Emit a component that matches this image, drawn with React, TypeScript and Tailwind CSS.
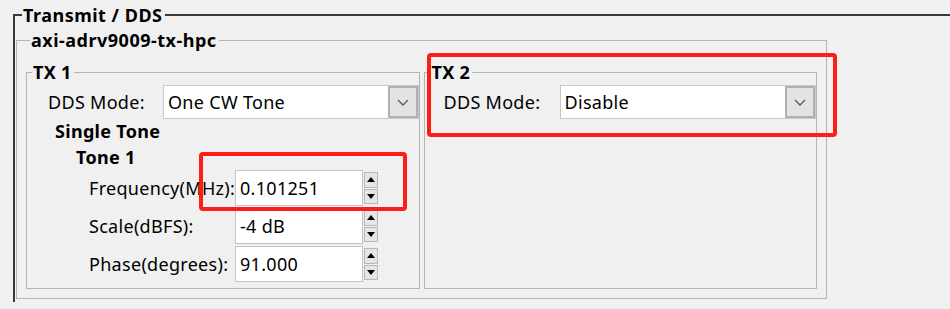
import React from 'react';

function Chevron() {
  return (
    <svg width="12" height="7" viewBox="0 0 12 7">
      <polyline points="1,1 6,6 11,1" fill="none" stroke="#5a5a5a" strokeWidth="1.3" />
    </svg>
  );
}

function Combo({ value }: { value: string }) {
  return (
    <div className="flex h-[34px] flex-1 border border-[#c8c8c8] bg-white">
      <div className="flex flex-1 items-center pl-[4px]">{value}</div>
      <div className="flex w-[30px] items-center justify-center border-2 border-[#b0b0b0] bg-[#e3e3e3]">
        <Chevron />
      </div>
    </div>
  );
}

function SpinButton({ up }: { up?: boolean }) {
  return (
    <div className="flex flex-1 items-center justify-center border border-[#b8b8b8] bg-[#e6e6e6]">
      <svg width="8" height="5" viewBox="0 0 8 5">
        {up ? <polygon points="0,5 4,0 8,5" fill="#000" /> : <polygon points="0,0 8,0 4,5" fill="#000" />}
      </svg>
    </div>
  );
}

function SpinRow({ label, value }: { label: string; value: string }) {
  return (
    <div className="ml-[62px] flex h-[36px] items-center">
      <div className="w-[146px] whitespace-nowrap">{label}</div>
      <div className="flex h-full w-[128px] items-center border border-[#c4c4c4] bg-white pl-[4px]">{value}</div>
      <div className="ml-[1px] flex h-full w-[14px] flex-col gap-[1px] py-[2px]">
        <SpinButton up />
        <SpinButton />
      </div>
    </div>
  );
}

export default function App() {
  return (
    <div className="relative h-[309px] w-[950px] overflow-hidden bg-[#f0f0f0] font-['Noto_Sans',sans-serif] text-[18px] leading-[24px] tracking-[0.3px] text-black">
      <fieldset className="ml-[13px] mt-[3px] w-[960px] min-w-0 border-l-2 border-t-2 border-[#3a3a3a] pb-[3px] pl-[1px]">
        <legend className="ml-[6px] pl-[1px] pr-[2px] font-bold tracking-[0.5px]">Transmit / DDS</legend>

        <fieldset className="mt-[1px] w-[811px] min-w-0 border border-[#b4b4b4] pb-[9px] pl-[9px] pr-[9px]">
          <legend className="ml-[4px] pl-[1px] pr-[2px] font-bold tracking-[0.5px]">axi-adrv9009-tx-hpc</legend>

          <div className="mt-[8px] grid grid-cols-2 gap-[4px]">
            <fieldset className="min-w-0 border border-[#b4b4b4] pb-[6px]">
              <legend className="ml-[5px] pl-[1px] pr-[2px] font-bold">TX 1</legend>
              <div className="mt-[1px] flex items-center">
                <div className="ml-[21px] w-[115px]">DDS Mode:</div>
                <Combo value="One CW Tone" />
              </div>
              <div className="ml-[28px] font-bold">Single Tone</div>
              <div className="ml-[49px] mt-[2px] font-bold">Tone 1</div>
              <div className="mt-[1px] flex flex-col gap-[2px]">
                <SpinRow label="Frequency(MHz):" value="0.101251" />
                <SpinRow label="Scale(dBFS):" value="-4 dB" />
                <SpinRow label="Phase(degrees):" value="91.000" />
              </div>
            </fieldset>

            <fieldset className="min-w-0 border border-[#b4b4b4]">
              <legend className="ml-[6px] pl-[1px] pr-[2px] font-bold">TX 2</legend>
              <div className="mt-[1px] flex items-center">
                <div className="ml-[19px] w-[116px]">DDS Mode:</div>
                <Combo value="Disable" />
              </div>
            </fieldset>
          </div>
        </fieldset>
      </fieldset>

      {/* red annotation marks */}
      <div className="absolute left-[427px] top-[53px] h-[84px] w-[410px] rounded-[4px] border-4 border-[#fa1e14]" />
      <div className="absolute left-[199px] top-[152px] h-[59px] w-[208px] rounded-[4px] border-4 border-[#fa1e14]" />
    </div>
  );
}
